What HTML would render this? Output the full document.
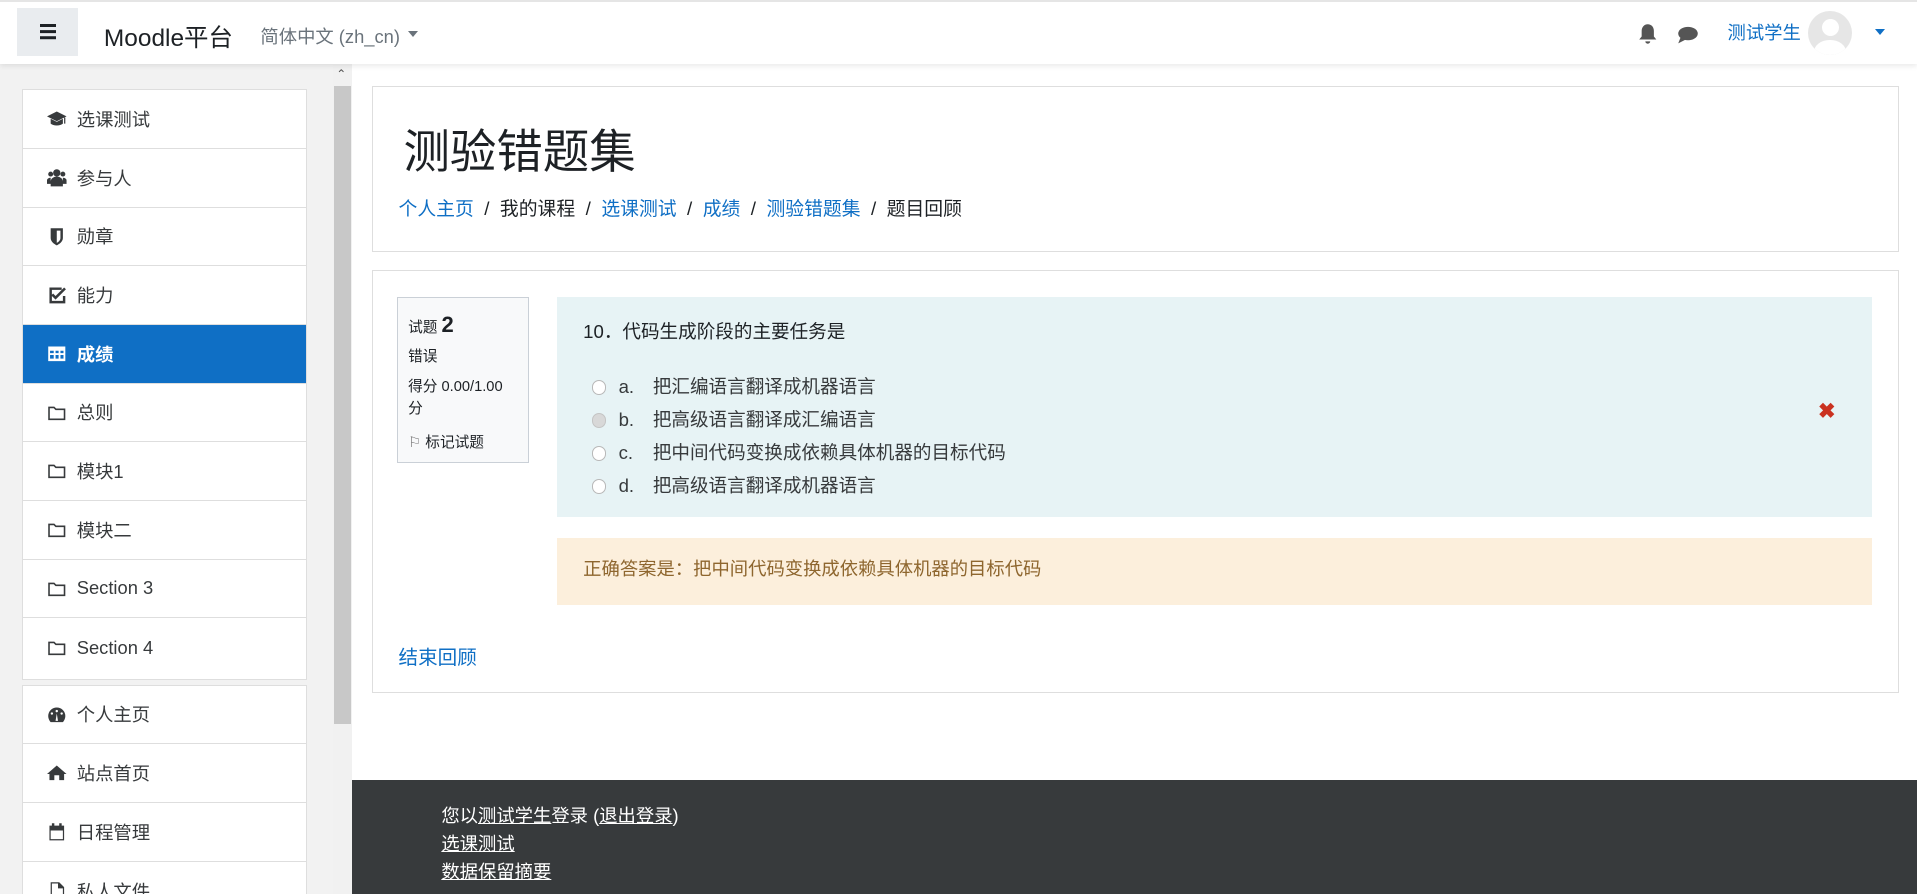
<!DOCTYPE html>
<html><head><meta charset="utf-8">
<style>
html,body{margin:0;padding:0;overflow:hidden;background:#fff}
#w{width:1568px;height:731px;position:relative;zoom:1.22258;font-family:"Liberation Sans","Noto Sans CJK SC",sans-serif;font-size:15px;color:#373a3c;overflow:hidden}
.a{position:absolute}
a{color:#0f6fc5;text-decoration:none}
.nav{left:0;top:0;width:1568px;height:52px;background:#fff;border-top:2px solid #e5e5e5;box-shadow:0 2px 4px rgba(0,0,0,.08);z-index:5;box-sizing:border-box}
.side{left:0;top:52px;width:272px;height:679px;background:#f2f2f2}
.list{left:18px;width:233px;background:#fff;border:1px solid #dedede;box-sizing:border-box}
.it{height:48px;border-bottom:1px solid #dedede;box-sizing:border-box;display:flex;align-items:center;padding-left:20px;font-size:15px}
.it:last-child{border-bottom:none}
.it svg{width:16px;height:16px;margin-right:8px;fill:#373a3c}
.it.act{background:#0f6fc5;color:#fff;font-weight:bold}
.it.act svg{fill:#fff}
.card{background:#fff;border:1px solid #dedede;box-sizing:border-box}
.radio{display:inline-block;width:12px;height:12px;border:1px solid #b8b8b8;border-radius:50%;background:#fff;vertical-align:middle;margin-right:10px;box-sizing:border-box}
.opt{position:absolute;left:484px;font-size:15.2px}
.opt b{font-weight:normal;display:inline-block;width:28px}
</style></head><body><div id="w">
<div class="a nav">
 <div class="a" style="left:14px;top:5px;width:50px;height:39px;background:#e9ecef"></div>
 <div class="a" style="left:33px;top:18px;width:13px;height:2.5px;background:#1d2125;box-shadow:0 5px 0 #1d2125,0 10px 0 #1d2125"></div>
 <div class="a" style="left:85px;top:14px;font-size:20px;color:#1d2125">Moodle平台</div>
 <div class="a" style="left:213px;top:17px;font-size:15px;color:#6a737b">简体中文 (zh_cn)</div>
 <div class="a" style="left:334px;top:24px;border:4.5px solid transparent;border-top:5px solid #6a737b"></div>
 <svg class="a" style="left:1340px;top:17px" width="16" height="18" viewBox="0 0 16 18"><path d="M8 1c-3 0-5 2.5-5 5.5V11l-2 2.5h14L13 11V6.5C13 3.5 11 1 8 1zM6 15a2 2 0 004 0z" fill="#555"/></svg>
 <svg class="a" style="left:1372px;top:19px" width="18" height="16" viewBox="0 0 18 16"><ellipse cx="9" cy="7" rx="8" ry="5.5" fill="#555"/><path d="M3 10l-2 5 6-3z" fill="#555"/></svg>
 <div class="a" style="left:1413px;top:14px;font-size:15px;color:#0f6fc5">测试学生</div>
 <div class="a" style="left:1479px;top:7px;width:36px;height:36px;border-radius:50%;background:#e6e6e6;overflow:hidden">
  <div class="a" style="left:11px;top:7px;width:14px;height:14px;border-radius:50%;background:#fff"></div>
  <div class="a" style="left:5px;top:24px;width:26px;height:20px;border-radius:50%;background:#fff"></div>
 </div>
 <div class="a" style="left:1534px;top:22px;border:4.5px solid transparent;border-top:5px solid #0f6fc5"></div>
</div>
<div class="a side"></div>
<div class="a" style="left:272px;top:52px;width:16px;height:679px;background:#f1f1f1"></div>
<div class="a" style="left:273px;top:70px;width:14px;height:522px;background:#c8c8c8"></div>
<div class="a" style="left:275px;top:55px;font-size:10px;color:#555">&#8963;</div>
<div class="a list" style="top:73px;height:483px">
 <div class="it"><svg viewBox="0 0 16 16"><path d="M0 6l8-4 8 4-8 4zM3 8v4c2 2 8 2 10 0V8l-5 2.5zM14 7v5h1V7z"/></svg>选课测试</div>
 <div class="it"><svg viewBox="0 0 16 16"><circle cx="8" cy="4" r="3"/><circle cx="3" cy="5" r="2"/><circle cx="13" cy="5" r="2"/><path d="M3 15v-4a5 4 0 0110 0v4zM0 13v-3a3 2 0 013-2v5zM16 13v-3a3 2 0 00-3-2v5z"/></svg>参与人</div>
 <div class="it"><svg viewBox="0 0 16 16"><path d="M3 1h10v8c0 3-3 5-5 6-2-1-5-3-5-6zM8 3v10c2-1 3-2.5 3-4V3z"/></svg>勋章</div>
 <div class="it"><svg viewBox="0 0 16 16"><path d="M2 2h10v2H4v9h9V9h2v6H2zM5 7l2 2 7-7 1.5 1.5L7 12 3.5 8.5z"/></svg>能力</div>
 <div class="it act"><svg viewBox="0 0 16 16"><path d="M1 2h14v12H1zM2.5 5.5v2h3v-2zm4.5 0v2h2.5v-2zm4 0v2h2.5v-2zM2.5 9v3h3V9zm4.5 0v3h2.5V9zm4 0v3h2.5V9z"/></svg>成绩</div>
 <div class="it"><svg viewBox="0 0 16 16"><path d="M1 3h5l1.5 1.5H15V14H1zm1.3 1.3v8.4h11.4V5.8H7L5.5 4.3z"/></svg>总则</div>
 <div class="it"><svg viewBox="0 0 16 16"><path d="M1 3h5l1.5 1.5H15V14H1zm1.3 1.3v8.4h11.4V5.8H7L5.5 4.3z"/></svg>模块1</div>
 <div class="it"><svg viewBox="0 0 16 16"><path d="M1 3h5l1.5 1.5H15V14H1zm1.3 1.3v8.4h11.4V5.8H7L5.5 4.3z"/></svg>模块二</div>
 <div class="it"><svg viewBox="0 0 16 16"><path d="M1 3h5l1.5 1.5H15V14H1zm1.3 1.3v8.4h11.4V5.8H7L5.5 4.3z"/></svg>Section 3</div>
 <div class="it"><svg viewBox="0 0 16 16"><path d="M1 3h5l1.5 1.5H15V14H1zm1.3 1.3v8.4h11.4V5.8H7L5.5 4.3z"/></svg>Section 4</div>
</div>
<div class="a list" style="top:560px;height:200px">
 <div class="it"><svg viewBox="0 0 16 16"><path d="M8 2a7 7 0 00-7 7c0 2 1 4 2 5h10c1-1 2-3 2-5a7 7 0 00-7-7zm0 2a1 1 0 110 2 1 1 0 010-2zM4 6a1 1 0 110 2 1 1 0 010-2zm8 0a1 1 0 110 2 1 1 0 010-2zM7 13l1-6 1 6z"/></svg>个人主页</div>
 <div class="it"><svg viewBox="0 0 16 16"><path d="M8 2L0 9h2v5h4v-4h4v4h4V9h2z"/></svg>站点首页</div>
 <div class="it"><svg viewBox="0 0 16 16"><path d="M2 3h12v12H2zm1 4v7h10V7zM4 1h2v3H4zm6 0h2v3h-2z"/></svg>日程管理</div>
 <div class="it"><svg viewBox="0 0 16 16"><path d="M3 1h7l4 4v10H3zm1 1v12h9V6H9V2z"/></svg>私人文件</div>
</div>
<div class="a card" style="left:304px;top:70px;width:1249px;height:136px"></div>
<div class="a" style="left:330px;top:94px;font-size:38px;color:#1d2125">测验错题集</div>
<div class="a" style="left:326px;top:159px;font-size:15.4px;color:#1d2125"><a>个人主页</a> &nbsp;/&nbsp; 我的课程 &nbsp;/&nbsp; <a>选课测试</a> &nbsp;/&nbsp; <a>成绩</a> &nbsp;/&nbsp; <a>测验错题集</a> &nbsp;/&nbsp; 题目回顾</div>
<div class="a card" style="left:304px;top:221px;width:1249px;height:346px"></div>
<div class="a" style="left:325px;top:243px;width:108px;height:136px;background:#f8f9fa;border:1px solid #cad0d7;box-sizing:border-box;font-size:12px;color:#1d2125">
 <div class="a" style="left:8px;top:11px">试题 <span style="font-size:18px;font-weight:bold">2</span></div>
 <div class="a" style="left:8px;top:38px">错误</div>
 <div class="a" style="left:8px;top:64px;line-height:18px">得分 0.00/1.00<br>分</div>
 <div class="a" style="left:8px;top:109px"><span style="color:#777">⚐</span> 标记试题</div>
</div>
<div class="a" style="left:456px;top:243px;width:1075px;height:180px;background:#e7f3f5"></div>
<div class="a" style="left:477px;top:259px;font-size:15.2px;color:#1d2125">10．代码生成阶段的主要任务是</div>
<div class="opt" style="top:304px"><span class="radio"></span><b>a.</b>把汇编语言翻译成机器语言</div>
<div class="opt" style="top:331px"><span class="radio" style="background:#d8d8d8;border-color:#c4c4c4"></span><b>b.</b>把高级语言翻译成汇编语言</div>
<div class="opt" style="top:358px"><span class="radio"></span><b>c.</b>把中间代码变换成依赖具体机器的目标代码</div>
<div class="opt" style="top:385px"><span class="radio"></span><b>d.</b>把高级语言翻译成机器语言</div>
<div class="a" style="left:1487px;top:326px;font-size:17px;color:#ca3120;font-weight:bold">✖</div>
<div class="a" style="left:456px;top:440px;width:1075px;height:55px;background:#fcefdc"></div>
<div class="a" style="left:477px;top:454px;font-size:15px;color:#8e662e">正确答案是：把中间代码变换成依赖具体机器的目标代码</div>
<div class="a" style="left:326px;top:524px;font-size:16px"><a>结束回顾</a></div>
<div class="a" style="left:288px;top:638px;width:1280px;height:93px;background:#373a3c"></div>
<div class="a" style="left:361px;top:656px;font-size:15px;color:#fff;line-height:23px">您以<u>测试学生</u>登录 (<u>退出登录</u>)<br><u>选课测试</u><br><u>数据保留摘要</u></div>
</div></body></html>
